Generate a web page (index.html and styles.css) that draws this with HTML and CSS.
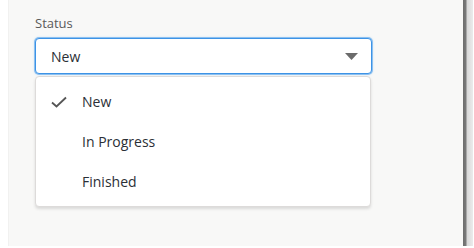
FILE: index.html
```html
<!DOCTYPE html>
<html>
<head>
<meta charset="utf-8">
<link rel="stylesheet" href="styles.css">
</head>
<body>
<div class="frame">
  <div class="panel">
    <div class="label">Status</div>
    <div class="select">
      <span class="value">New</span>
      <svg class="caret" width="13" height="7" viewBox="0 0 13 7"><path d="M0 0H13L6.5 7Z" fill="#6b6b6b"/></svg>
    </div>
    <div class="menu">
      <div class="item">
        <span class="check"><svg width="16" height="12" viewBox="0 0 16 12"><path d="M1 6.5L5.5 10.5L15 1.5" fill="none" stroke="#555" stroke-width="1.8"/></svg></span>
        <span>New</span>
      </div>
      <div class="item"><span class="check"></span><span>In Progress</span></div>
      <div class="item"><span class="check"></span><span>Finished</span></div>
    </div>
  </div>
  <div class="edge"></div>
</div>
</body>
</html>
```
FILE: styles.css
```css
html, body {
  margin: 0;
  padding: 0;
  background: #ffffff;
}
body {
  font-family: "Open Sans", "Liberation Sans", sans-serif;
}
.frame {
  display: flex;
  height: 246px;
  padding-left: 8px;
}
.panel {
  width: 428px;
  background: #f8f8f7;
  border-left: 1px solid #f1f1f0;
  padding: 14px 0 0 26px;
}
.edge {
  width: 10px;
  background: linear-gradient(to right, #6e6e6e 0, #7a7a7a 3px, #d8d8d8 4px, #ececec 10px);
}
.label {
  font-size: 13px;
  line-height: 18px;
  color: #5a5a5a;
  margin-bottom: 6px;
}
.select {
  box-sizing: border-box;
  width: 337px;
  height: 36px;
  background: #fff;
  border: 1px solid #3d93e6;
  border-radius: 4px;
  box-shadow: 0 0 0 1px #8cc0f0, 0 0 3px #a9d0f5;
  display: flex;
  align-items: center;
  justify-content: space-between;
  padding: 0 13px 0 15px;
  font-size: 14px;
  color: #2b2f36;
}
.caret {
  display: block;
}
.menu {
  box-sizing: border-box;
  width: 336px;
  margin-top: 2px;
  background: #fff;
  border: 1px solid #dddbda;
  border-radius: 4px;
  box-shadow: 0 2px 3px rgba(0,0,0,0.12);
  padding: 4px 0 5px;
}
.item {
  display: flex;
  align-items: center;
  height: 40px;
  padding-left: 15px;
  font-size: 14px;
  color: #2b2f36;
}
.check {
  width: 16px;
  margin-right: 15px;
  display: flex;
  align-items: center;
}
.check svg {
  display: block;
  margin-top: 2px;
}
```
